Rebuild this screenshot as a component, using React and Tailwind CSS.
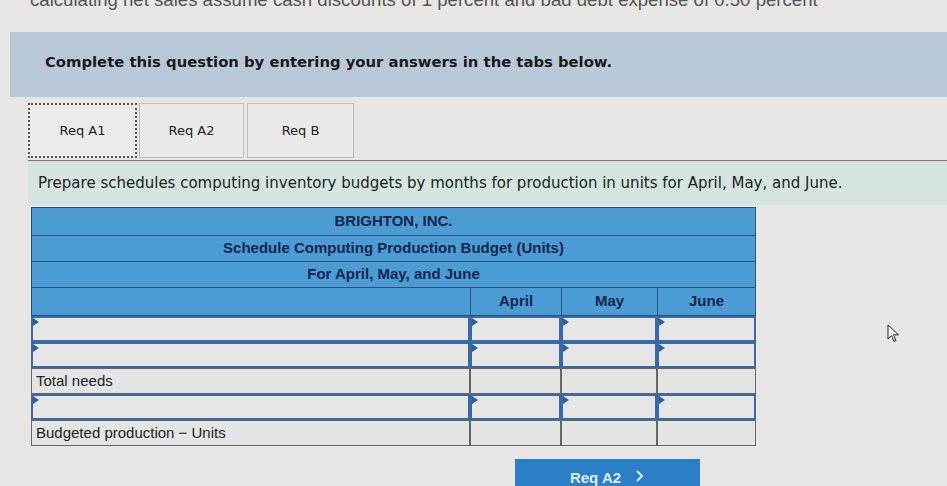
import React from "react";

const Marker = () => (
  <svg className="absolute left-0 top-0" width="6" height="9" viewBox="0 0 6 9">
    <path d="M0 0 L6 4 L0 8 Z" fill="#2f5f9c" />
  </svg>
);

const InputCell = ({ w }) => (
  <div className={`relative ${w} h-full border-2 border-[#3a69a3] bg-[#e6e6e6]`}>
    <Marker />
  </div>
);

const InputRow = () => (
  <div className="flex h-[26px]">
    <InputCell w="w-[439px]" />
    <InputCell w="w-[91px]" />
    <InputCell w="w-[96px]" />
    <InputCell w="w-[99px]" />
  </div>
);

const TextRow = ({ label }) => (
  <div className="flex h-[26px] text-[15px] text-[#222]">
    <div className="w-[439px] h-full border border-[#666] flex items-center pl-[4px] bg-[#e4e4e4]">{label}</div>
    <div className="w-[91px] h-full border border-[#666] bg-[#e4e4e4]" />
    <div className="w-[96px] h-full border border-[#666] bg-[#e4e4e4]" />
    <div className="w-[99px] h-full border border-[#666] bg-[#e4e4e4]" />
  </div>
);

export default function App() {
  return (
    <div className="relative w-[947px] h-[486px] overflow-hidden bg-[#e7e6e4]" style={{ fontFamily: '"Liberation Sans", Arial, sans-serif' }}>
      {/* top cut text */}
      <div className="h-[32px] overflow-hidden pl-[30px]">
        <div className="mt-[-11px] text-[18.6px] leading-[22px] text-[#555] whitespace-nowrap">
          calculating net sales assume cash discounts of 1 percent and bad debt expense of 0.50 percent
        </div>
      </div>
      {/* banner */}
      <div className="ml-[10px] h-[65px] bg-[#b9c8d6] flex items-center pl-[35px]">
        <span className="text-[14.8px] font-bold text-[#1a1a1a] mt-[-4px]" style={{ fontFamily: '"DejaVu Sans", Verdana, sans-serif' }}>
          Complete this question by entering your answers in the tabs below.
        </span>
      </div>
      {/* tabs */}
      <div className="mt-[6px] ml-[28px] flex h-[55px] gap-[2px] text-[13px] text-[#222]" style={{ fontFamily: '"DejaVu Sans", Verdana, sans-serif' }}>
        <div className="w-[109px] h-full border-2 border-dotted border-[#555] bg-[#ebebe9] flex items-center justify-center pt-[1px]">Req A1</div>
        <div className="w-[105px] h-full border border-[#bdbdbd] bg-[#e9e9e7] flex items-center justify-center pt-[1px]">Req A2</div>
        <div className="w-[107px] h-full border border-[#bdbdbd] bg-[#e9e9e7] flex items-center justify-center ml-[1px] pt-[1px]">Req B</div>
      </div>
      {/* instruction band */}
      <div className="ml-[28px] h-[45px] border-t border-[#7a7a7a] bg-[#d3e5de] flex items-center pl-[10px] mt-[2px]">
        <span className="text-[15px] text-[#222]" style={{ fontFamily: '"DejaVu Sans", Verdana, sans-serif' }}>
          Prepare schedules computing inventory budgets by months for production in units for April, May, and June.
        </span>
      </div>
      {/* table */}
      <div className="ml-[31px] mt-[2px] w-[725px]">
        <div className="bg-[#4b9bd4] border border-[#2d4f7a] text-[15px] font-bold text-[#17244a]">
          <div className="h-[28px] flex items-center justify-center border-b border-[#2d4f7a]">BRIGHTON, INC.</div>
          <div className="h-[26px] flex items-center justify-center border-b border-[#2d4f7a]">Schedule Computing Production Budget (Units)</div>
          <div className="h-[26px] flex items-center justify-center border-b border-[#2d4f7a]">For April, May, and June</div>
          <div className="h-[27px] flex">
            <div className="w-[438px]" />
            <div className="w-[91px] border-l border-[#2d4f7a] flex items-center justify-center">April</div>
            <div className="w-[96px] border-l border-[#2d4f7a] flex items-center justify-center">May</div>
            <div className="w-[98px] border-l border-[#2d4f7a] flex items-center justify-center">June</div>
          </div>
        </div>
        <InputRow />
        <InputRow />
        <TextRow label="Total needs" />
        <InputRow />
        <TextRow label="Budgeted production − Units" />
      </div>
      {/* button */}
      <div className="ml-[515px] mt-[13px] w-[185px] h-[40px] bg-[#2b7fc6] flex items-start justify-center pt-[8px] gap-[14px] text-[15px] font-bold text-[#dfeaf6]">
        <span>Req A2</span>
        <svg width="10" height="14" viewBox="0 0 10 14" className="mt-[2px]">
          <path d="M2 2 L7 7 L2 12" fill="none" stroke="#dfeaf6" strokeWidth="2" />
        </svg>
      </div>
      {/* cursor */}
      <svg className="absolute left-[887px] top-[324px]" width="14" height="20" viewBox="0 0 14 20">
        <path d="M1 1 L1 15 L4.5 11.5 L7 17.5 L9 16.5 L6.5 10.8 L11.5 10.8 Z" fill="#f2f2f2" stroke="#222" strokeWidth="1" strokeLinejoin="round" />
      </svg>
    </div>
  );
}
